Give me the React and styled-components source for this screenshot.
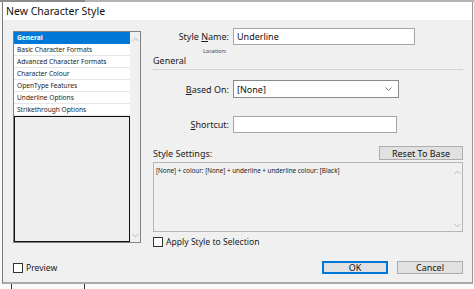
import React from 'react';
import styled, { createGlobalStyle } from 'styled-components';

const GlobalStyle = createGlobalStyle`
  html, body {
    margin: 0;
    padding: 0;
    background: #f7f7f7;
  }
  body {
    font-family: "Noto Sans", "Open Sans", sans-serif;
    color: #000;
  }
`;

const sections = [
  'General',
  'Basic Character Formats',
  'Advanced Character Formats',
  'Character Colour',
  'OpenType Features',
  'Underline Options',
  'Strikethrough Options',
];

function Chevron({ up }) {
  return (
    <svg width="7" height="5" viewBox="0 0 7 5">
      <path
        d={up ? 'M0.5 4 L3.5 1 L6.5 4' : 'M0.5 1 L3.5 4 L6.5 1'}
        fill="none"
        stroke="#b8b8b8"
        strokeWidth="1"
      />
    </svg>
  );
}

function Label({ children, accessKey }) {
  const rest = children.slice(1);
  return (
    <FieldLabel>
      <u>{accessKey}</u>
      {rest}
    </FieldLabel>
  );
}

function App() {
  return (
    <>
      <GlobalStyle />
      <Page>
        <TopStrip>
          <TopTab />
        </TopStrip>
        <Window>
          <TitleBar>New Character Style</TitleBar>
          <Body>
            <Main>
              <Sidebar>
                <ListArea>
                  <List>
                    {sections.map((s, i) => (
                      <Item key={s} selected={i === 0}>{s}</Item>
                    ))}
                  </List>
                  <EmptyBox />
                </ListArea>
                <ScrollBar>
                  <Chevron up />
                  <Chevron />
                </ScrollBar>
              </Sidebar>

              <Panel>
                <FormRow>
                  <FieldLabel>
                    Style <u>N</u>ame:
                  </FieldLabel>
                  <TextBox width={182} value="Underline" readOnly />
                </FormRow>
                <Location>Location:</Location>
                <Heading>General</Heading>
                <Divider />
                <FormRow top={10}>
                  <Label accessKey="B">Based On:</Label>
                  <Select>
                    <span>[None]</span>
                    <svg width="7" height="4" viewBox="0 0 7 4">
                      <path d="M0.5 0.5 L3.5 3.5 L6.5 0.5" fill="none" stroke="#777" strokeWidth="1" />
                    </svg>
                  </Select>
                </FormRow>
                <FormRow top={18}>
                  <Label accessKey="S">Shortcut:</Label>
                  <TextBox width={164} readOnly />
                </FormRow>
                <SettingsHead>
                  <SubLabel>Style Settings:</SubLabel>
                  <Button width={84} height={14}>Reset To Base</Button>
                </SettingsHead>
                <SettingsBox>
                  <SettingsText>
                    [None] + colour: [None] + underline + underline colour: [Black]
                  </SettingsText>
                  <BoxScroll>
                    <Chevron up />
                    <Chevron />
                  </BoxScroll>
                </SettingsBox>
                <CheckRow top={4}>
                  <Box />
                  <CheckText>Apply Style to Selection</CheckText>
                </CheckRow>
              </Panel>
            </Main>

            <Footer>
              <CheckRow>
                <Box />
                <CheckText>Preview</CheckText>
              </CheckRow>
              <Buttons>
                <Button width={66} height={13} primary>OK</Button>
                <Button width={66} height={13}>Cancel</Button>
              </Buttons>
            </Footer>
          </Body>
        </Window>
        <BottomStrip>
          <Mark />
          <Mark left={72} />
        </BottomStrip>
      </Page>
    </>
  );
}

const Page = styled.div`
  width: 474px;
  height: 289px;
  display: flex;
  flex-direction: column;
  overflow: hidden;
`;

const TopStrip = styled.div`
  height: 2px;
  background: #b4b4b4;
  display: flex;
`;

const TopTab = styled.div`
  width: 85px;
  background: #8c8c8c;
`;

const Window = styled.div`
  height: 282px;
  margin: 0 1px 0 2px;
  border-left: 1px solid #7a7a7a;
  border-right: 1px solid #9a9a9a;
  border-bottom: 2px solid #a9a9a9;
  background: #f0f0f0;
  display: flex;
  flex-direction: column;
  box-sizing: border-box;
`;

const TitleBar = styled.div`
  height: 18px;
  background: #fff;
  font-size: 10.5px;
  line-height: 18px;
  padding-left: 3px;
  color: #111;
`;

const Body = styled.div`
  flex: 1;
  padding: 8px 9px 0 10px;
  display: flex;
  flex-direction: column;
`;

const Main = styled.div`
  display: grid;
  grid-template-columns: 128px 1fr;
  column-gap: 12px;
`;

const Sidebar = styled.div`
  margin-top: 3px;
  height: 212px;
  border: 1px solid #828282;
  background: #f0f0f0;
  display: flex;
  box-sizing: border-box;
`;

const ListArea = styled.div`
  width: 116px;
  display: flex;
  flex-direction: column;
`;

const List = styled.div`
  display: flex;
  flex-direction: column;
`;

const Item = styled.div`
  height: 12px;
  line-height: 12px;
  padding-left: 3px;
  font-size: 6.6px;
  white-space: nowrap;
  background: ${(p) => (p.selected ? '#0078d7' : '#fff')};
  color: ${(p) => (p.selected ? '#fff' : '#1a1a1a')};
  font-weight: ${(p) => (p.selected ? 700 : 400)};
  border-bottom: 1px solid ${(p) => (p.selected ? '#0078d7' : '#e6e6e6')};
  box-sizing: border-box;
`;

const EmptyBox = styled.div`
  flex: 1;
  border: 1.5px solid #111;
  background: #eeeeee;
`;

const ScrollBar = styled.div`
  flex: 1;
  display: flex;
  flex-direction: column;
  justify-content: space-between;
  align-items: center;
  padding: 5px 0 4px;
`;

const Panel = styled.div`
  display: flex;
  flex-direction: column;
`;

const FormRow = styled.div`
  display: flex;
  align-items: center;
  margin-top: ${(p) => p.top || 0}px;
`;

const FieldLabel = styled.div`
  width: 76px;
  margin-right: 4px;
  text-align: right;
  font-size: 9px;
  color: #1a1a1a;
  white-space: nowrap;
`;

const TextBox = styled.input`
  width: ${(p) => p.width}px;
  height: 17px;
  box-sizing: border-box;
  border: 1px solid #a6a6a6;
  background: #fff;
  padding: 0 3px;
  font-family: inherit;
  font-size: 9px;
  color: #111;
  outline: none;
`;

const Location = styled.div`
  margin: 2px 0 0 50px;
  font-size: 5.5px;
  color: #444;
  height: 7px;
`;

const Heading = styled.div`
  font-size: 9px;
  color: #1a1a1a;
  margin-top: 1px;
  line-height: 12px;
`;

const Divider = styled.div`
  height: 1px;
  background: #d4d4d4;
  margin-top: 2px;
`;

const Select = styled.div`
  width: 166px;
  height: 18px;
  box-sizing: border-box;
  border: 1px solid #8a8a8a;
  background: #fff;
  display: flex;
  align-items: center;
  justify-content: space-between;
  padding: 0 6px 0 3px;
  font-size: 9px;
  color: #111;
`;

const SettingsHead = styled.div`
  display: flex;
  justify-content: space-between;
  align-items: flex-end;
  margin-top: 13px;
`;

const SubLabel = styled.div`
  font-size: 9px;
  color: #1a1a1a;
  line-height: 12px;
`;

const Button = styled.div`
  width: ${(p) => p.width}px;
  height: ${(p) => p.height}px;
  box-sizing: border-box;
  border: ${(p) => (p.primary ? '2px solid #0078d7' : '1px solid #adadad')};
  background: #e1e1e1;
  display: flex;
  align-items: center;
  justify-content: center;
  font-size: 9px;
  color: #111;
`;

const SettingsBox = styled.div`
  margin-top: 2px;
  height: 70px;
  box-sizing: border-box;
  border: 1px solid #b5b5b5;
  background: #f0f0f0;
  display: flex;
  justify-content: space-between;
`;

const SettingsText = styled.div`
  font-size: 6.3px;
  padding: 3px 0 0 2px;
  color: #222;
  white-space: nowrap;
`;

const BoxScroll = styled.div`
  width: 10px;
  display: flex;
  flex-direction: column;
  justify-content: space-between;
  align-items: center;
  padding: 7px 0 3px;
`;

const CheckRow = styled.div`
  display: flex;
  align-items: center;
  gap: 3px;
  margin-top: ${(p) => p.top || 0}px;
`;

const Box = styled.div`
  width: 10px;
  height: 10px;
  box-sizing: border-box;
  border: 1px solid #333;
  background: #fff;
`;

const CheckText = styled.div`
  font-size: 8.6px;
  color: #1a1a1a;
`;

const Footer = styled.div`
  display: flex;
  justify-content: space-between;
  align-items: center;
  margin-top: 13px;
`;

const Buttons = styled.div`
  display: flex;
  gap: 9px;
`;

const BottomStrip = styled.div`
  flex: 1;
  display: flex;
  background: #fafafa;
  padding-left: 11px;
`;

const Mark = styled.div`
  width: 1px;
  background: #333;
  margin-left: ${(p) => p.left || 0}px;
`;

export default App;
